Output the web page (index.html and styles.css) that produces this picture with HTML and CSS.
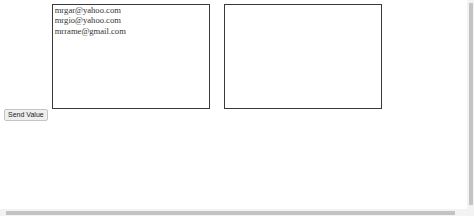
FILE: index.html
```html
<!DOCTYPE html>
<html lang="en">
<head>
    <meta charset="UTF-8">
    <title>Send Value</title>
    <link rel="stylesheet" href="styles.css">
</head>
<body>
    <div class="row">
        <button class="btn" type="button">Send Value</button>
        <select class="list" id="source" multiple>
            <option>mrgar@yahoo.com</option>
            <option>mrgio@yahoo.com</option>
            <option>mrrame@gmail.com</option>
        </select>
        <select class="list list-target" id="target" multiple></select>
    </div>

    <!-- page scrollbars -->
    <div class="scroll scroll-v"><div class="thumb"></div></div>
    <div class="scroll scroll-h"><div class="thumb"></div></div>
    <div class="scroll scroll-corner"></div>
</body>
</html>
```

FILE: styles.css
```css
html, body {
    overflow: hidden;
}

body {
    margin: 4px;
    background: #fff;
}

.row {
    display: flex;
    align-items: flex-end;
}

.btn {
    font-family: "Liberation Sans", Arial, sans-serif;
    font-size: 7px;
    color: #222;
    background: #efefef;
    border: 1px solid #c4c4c4;
    border-radius: 2px;
    padding: 1px 3px;
    height: 12px;
    line-height: 8px;
    margin-right: 4px;
}

.list {
    width: 158px;
    height: 105px;
    border: 1px solid #3a3a3a;
    border-radius: 0;
    background: #fff;
    font-family: "Liberation Serif", "Times New Roman", serif;
    font-size: 8.6px;
    color: #333;
    padding: 0;
    margin: 0 0 12px 0;
    overflow: hidden;
    outline: none;
}

.list option {
    padding: 0 2px;
    line-height: 10.5px;
}

.list-target {
    margin-left: 14px;
}

.scroll {
    position: fixed;
    background: #f3f3f3;
    display: flex;
}

.scroll-v {
    top: 0;
    right: 0;
    bottom: 7px;
    width: 7px;
    padding: 3px 1px 4px 2px;
    box-sizing: border-box;
}

.scroll-h {
    left: 0;
    right: 7px;
    bottom: 0;
    height: 7px;
    padding: 2px 12px 1px 6px;
    box-sizing: border-box;
}

.scroll-corner {
    right: 0;
    bottom: 0;
    width: 7px;
    height: 7px;
}

.thumb {
    flex: 1;
    background: #c3c3c3;
}
```
